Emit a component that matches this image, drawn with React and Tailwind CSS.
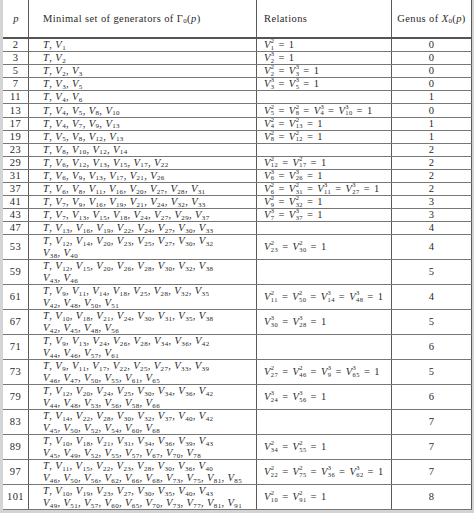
import React from "react";

const single = [
  { p: 2, g: [1], r: [[1, 2]], genus: 0 },
  { p: 3, g: [2], r: [[2, 3]], genus: 0 },
  { p: 5, g: [2, 3], r: [[2, 2], [3, 3]], genus: 0 },
  { p: 7, g: [3, 5], r: [[3, 3], [5, 3]], genus: 0 },
  { p: 11, g: [4, 6], r: [], genus: 1 },
  { p: 13, g: [4, 5, 8, 10], r: [[5, 2], [8, 2], [4, 3], [10, 3]], genus: 0 },
  { p: 17, g: [4, 7, 9, 13], r: [[4, 2], [13, 2]], genus: 1 },
  { p: 19, g: [5, 8, 12, 13], r: [[8, 2], [12, 2]], genus: 1 },
  { p: 23, g: [8, 10, 12, 14], r: [], genus: 2 },
  { p: 29, g: [6, 12, 13, 15, 17, 22], r: [[12, 2], [17, 2]], genus: 2 },
  { p: 31, g: [6, 9, 13, 17, 21, 26], r: [[6, 3], [26, 3]], genus: 2 },
  { p: 37, g: [6, 8, 11, 16, 20, 27, 28, 31], r: [[6, 2], [31, 2], [11, 3], [27, 3]], genus: 2 },
  { p: 41, g: [7, 9, 16, 19, 21, 24, 32, 33], r: [[9, 2], [32, 2]], genus: 3 },
  { p: 43, g: [7, 13, 15, 18, 24, 27, 29, 37], r: [[7, 3], [37, 3]], genus: 3 },
  { p: 47, g: [13, 16, 19, 22, 24, 27, 30, 33], r: [], genus: 4 },
];

const double = [
  { p: 53, g: [12, 14, 20, 23, 25, 27, 30, 32], g2: [38, 40], r: [[23, 2], [30, 2]], genus: 4 },
  { p: 59, g: [12, 15, 20, 26, 28, 30, 32, 38], g2: [43, 46], r: [], genus: 5 },
  { p: 61, g: [9, 11, 14, 18, 25, 28, 32, 35], g2: [42, 48, 50, 51], r: [[11, 2], [50, 2], [14, 3], [48, 3]], genus: 4 },
  { p: 67, g: [10, 18, 21, 24, 30, 31, 35, 38], g2: [42, 45, 48, 56], r: [[30, 3], [28, 3]], genus: 5 },
  { p: 71, g: [9, 13, 24, 26, 28, 34, 36, 42], g2: [44, 46, 57, 61], r: [], genus: 6 },
  { p: 73, g: [9, 11, 17, 22, 25, 27, 33, 39], g2: [46, 47, 50, 55, 61, 65], r: [[27, 2], [46, 2], [9, 3], [65, 3]], genus: 5 },
  { p: 79, g: [12, 20, 24, 25, 30, 34, 36, 42], g2: [44, 48, 53, 56, 58, 66], r: [[24, 3], [56, 3]], genus: 6 },
  { p: 83, g: [14, 22, 28, 30, 32, 37, 40, 42], g2: [45, 50, 52, 54, 60, 68], r: [], genus: 7 },
  { p: 89, g: [10, 18, 21, 31, 34, 36, 39, 43], g2: [45, 49, 52, 55, 57, 67, 70, 78], r: [[34, 2], [55, 2]], genus: 7 },
  { p: 97, g: [11, 15, 22, 23, 28, 30, 36, 40], g2: [46, 50, 56, 62, 66, 68, 73, 75, 81, 85], r: [[22, 2], [75, 2], [36, 3], [62, 3]], genus: 7 },
  { p: 101, g: [10, 19, 23, 27, 30, 35, 40, 43], g2: [49, 51, 57, 60, 65, 70, 73, 77, 81, 91], r: [[10, 2], [91, 2]], genus: 8 },
];

// subscript as in T, V_12
function Sub({ children }) {
  return (
    <span className="relative top-[1.5px] text-[7px] leading-none tracking-[0.3px]">
      {children}
    </span>
  );
}

function V({ s }) {
  return (
    <span>
      <i>V</i>
      <Sub>{s}</Sub>
    </span>
  );
}

// V with stacked power and index, as in V_12^2
function VP({ s, e }) {
  return (
    <span className="inline-flex items-center">
      <i>V</i>
      <span className="inline-flex flex-col text-[6.5px] leading-[6.5px] relative -top-[0.5px]">
        <span>{e}</span>
        <span>{s}</span>
      </span>
    </span>
  );
}

function GenLine({ subs, withT }) {
  return (
    <div className="whitespace-nowrap h-[12px] leading-[12px]">
      {withT && <i>T</i>}
      {subs.map((s, i) => (
        <React.Fragment key={s}>
          {(withT || i > 0) && ", "}
          <V s={s} />
        </React.Fragment>
      ))}
    </div>
  );
}

function Rel({ r }) {
  if (!r.length) return null;
  return (
    <div className="whitespace-nowrap flex items-center h-[12px]">
      {r.map(([s, e], i) => (
        <React.Fragment key={i}>
          <VP s={s} e={e} />
          <span className="mx-[4px]">=</span>
        </React.Fragment>
      ))}
      <span>1</span>
    </div>
  );
}

const cols = "grid grid-cols-[26px_228px_135px_80px]";
const cell = "border-r-[1.5px] border-[#5a5a5a] flex items-center";

export default function App() {
  return (
    <div
      className="w-[474px] h-[513px] bg-[#d4d4d4] pl-[3px] overflow-hidden text-[#2a2a2a]"
      style={{ fontFamily: '"Liberation Serif", "DejaVu Serif", serif' }}
    >
      <div className="w-[469px] bg-white text-[10.5px] leading-[12px] tracking-[0.4px]">
        <div className={`${cols} h-[39px] border-b-2 border-[#555]`}>
          <div className={`${cell} justify-center pl-[1px]`}>
            <i>p</i>
          </div>
          <div className={`${cell} pl-[14px]`}>
            <span>
              Minimal set of generators of Γ<Sub>0</Sub>(<i>p</i>)
            </span>
          </div>
          <div className={`${cell} pl-[7px]`}>Relations</div>
          <div className={`${cell} justify-center`}>
            <span>
              Genus of <i>X</i>
              <Sub>0</Sub>(<i>p</i>)
            </span>
          </div>
        </div>

        {single.map((row) => (
          <div key={row.p} className={`${cols} h-[13.1px] border-b border-[#777]`}>
            <div className={`${cell} justify-center`}>{row.p}</div>
            <div className={`${cell} pl-[14px]`}>
              <GenLine subs={row.g} withT />
            </div>
            <div className={`${cell} pl-[7px]`}>
              <Rel r={row.r} />
            </div>
            <div className={`${cell} justify-center`}>{row.genus}</div>
          </div>
        ))}

        {double.map((row) => (
          <div key={row.p} className={`${cols} h-[25px] border-b border-[#777]`}>
            <div className={`${cell} justify-center`}>{row.p}</div>
            <div className={`${cell} pl-[14px]`}>
              <div className="flex flex-col">
                <GenLine subs={row.g} withT />
                <GenLine subs={row.g2} />
              </div>
            </div>
            <div className={`${cell} pl-[7px]`}>
              <Rel r={row.r} />
            </div>
            <div className={`${cell} justify-center`}>{row.genus}</div>
          </div>
        ))}
      </div>
    </div>
  );
}
